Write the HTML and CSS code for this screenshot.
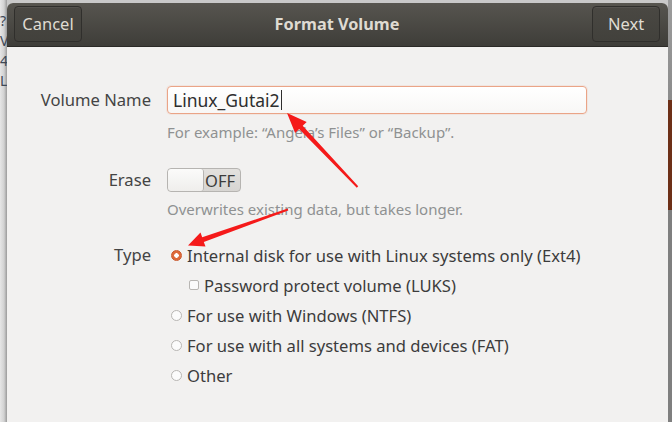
FILE: index.html
```html
<!DOCTYPE html>
<html>
<head>
<meta charset="utf-8">
<link rel="stylesheet" href="styles.css">
</head>
<body>
<div class="screen">
  <div class="behind-left">
    <span>?</span><span>V</span><span>4</span><span>L</span>
  </div>
  <div class="dialog">
    <header class="headerbar">
      <button class="hb-btn">Cancel</button>
      <div class="title">Format Volume</div>
      <button class="hb-btn">Next</button>
    </header>
    <main class="content">
      <div class="form">
        <div class="label row-name">Volume Name</div>
        <div class="field">
          <div class="entry"><span class="entry-text">Linux_Gutai2</span><span class="caret"></span></div>
          <div class="hint">For example: “Angela’s Files” or “Backup”.</div>
        </div>

        <div class="label row-erase">Erase</div>
        <div class="field">
          <div class="switch"><span class="knob"></span><span class="state">OFF</span></div>
          <div class="hint">Overwrites existing data, but takes longer.</div>
        </div>

        <div class="label row-type">Type</div>
        <div class="field options">
          <div class="opt"><span class="radio checked"></span>Internal disk for use with Linux systems only (Ext4)</div>
          <div class="opt sub"><span class="check"></span>Password protect volume (LUKS)</div>
          <div class="opt"><span class="radio"></span>For use with Windows (NTFS)</div>
          <div class="opt"><span class="radio"></span>For use with all systems and devices (FAT)</div>
          <div class="opt"><span class="radio"></span>Other</div>
        </div>
      </div>
    </main>
  </div>
  <div class="behind-right">
    <div class="br-top"></div>
    <div class="br-brown"></div>
    <div class="br-bottom"></div>
  </div>
</div>
<svg class="arrows" width="672" height="422" viewBox="0 0 672 422">
  <polygon fill="#f51a1a" points="287,113 306.7,121.9 302.7,125.7 358.2,186.3 356.8,187.7 299.1,129.1 295.1,132.9"/>
  <polygon fill="#f51a1a" points="188,245.5 200.5,232.6 202.2,237.3 287.7,208.6 288.3,210.4 203.8,242 205.5,246.6"/>
</svg>
</body>
</html>
```
FILE: styles.css
```css
html, body {
  margin: 0;
  padding: 0;
}
body {
  width: 672px;
  height: 422px;
  overflow: hidden;
  position: relative;
  font-family: "Noto Sans", "Open Sans", sans-serif;
  background: #c9c9c9;
}
.screen {
  display: flex;
  height: 422px;
}
.behind-left {
  width: 7px;
  flex: none;
  background: linear-gradient(to right, #e6e6e6 0, #d2d2d2 4px, #9a9a9a 7px);
  display: flex;
  flex-direction: column;
  padding-top: 14px;
  gap: 6px;
  overflow: hidden;
  font-size: 14px;
  color: #3d4856;
  line-height: 14px;
}
.behind-left span {
  display: block;
  height: 14px;
  width: 7px;
  overflow: hidden;
}
.dialog {
  width: 661px;
  flex: none;
  margin-top: 3px;
  display: flex;
  flex-direction: column;
  background: #f2f1f0;
  border-radius: 6px 6px 0 0;
  overflow: hidden;
}
.headerbar {
  height: 44px;
  flex: none;
  display: flex;
  align-items: center;
  justify-content: space-between;
  padding: 0 8px 0 7px;
  background: linear-gradient(to bottom, #57554f, #3e3d39);
  border-bottom: 1px solid #2b2a27;
  box-sizing: border-box;
}
.hb-btn {
  height: 36px;
  min-width: 68px;
  margin-top: -2px;
  padding: 0 7px;
  font-family: inherit;
  font-size: 16.5px;
  color: #dfdbd2;
  background: linear-gradient(to bottom, #4a4843, #42413c);
  border: 1px solid #302f2c;
  border-radius: 4px;
  box-shadow: inset 0 1px rgba(255,255,255,0.06);
}
.title {
  font-weight: bold;
  font-size: 16.3px;
  color: #dfdbd2;
  margin-top: -2px;
}
.content {
  flex: 1;
}
.form {
  display: grid;
  grid-template-columns: 144px 1fr;
  column-gap: 16px;
  padding: 39px 0 0 0;
  align-items: start;
  font-size: 16.6px;
  color: #3c3c3c;
}
.label {
  text-align: right;
  line-height: 28px;
  color: #444444;
}
.row-erase { margin-top: 26px; height: 24px; line-height: 24px; }
.row-type { margin-top: 26px; line-height: 20px; }
.field {
  display: flex;
  flex-direction: column;
}
.entry {
  width: 420px;
  height: 28px;
  box-sizing: border-box;
  border: 1px solid #eaa487;
  border-radius: 4px;
  background: linear-gradient(to bottom, #ffffff, #f8f7f6);
  box-shadow: 0 0 0 1px rgba(233,84,32,0.08);
  display: flex;
  align-items: center;
  padding-left: 5px;
  font-size: 17.5px;
  color: #2e2e2e;
}
.caret {
  width: 1px;
  height: 20px;
  background: #2e2e2e;
  margin-left: 1px;
}
.hint {
  margin-top: 8px;
  font-size: 15px;
  color: #8f9192;
  line-height: 20px;
}
.switch {
  margin-top: 26px;
  width: 74px;
  height: 24px;
  box-sizing: border-box;
  border: 1px solid #b6b4b1;
  border-radius: 4px;
  background: linear-gradient(to bottom, #e3e1de, #d7d5d2);
  display: flex;
  align-items: center;
  overflow: hidden;
}
.knob {
  width: 36px;
  height: 22px;
  box-sizing: border-box;
  background: linear-gradient(to bottom, #fbfbfa, #efeeec);
  border-right: 1px solid #b6b4b1;
  border-radius: 3px;
}
.state {
  font-size: 16.5px;
  color: #3c3c3c;
  margin-left: 1px;
}
.switch + .hint { margin-top: 7px; }
.options {
  margin-top: 26px;
  gap: 10px;
}
.opt {
  display: flex;
  align-items: center;
  height: 20px;
  color: #3c3c3c;
  white-space: nowrap;
}
.opt.sub {
  padding-left: 22px;
}
.radio {
  width: 9px;
  height: 9px;
  border-radius: 50%;
  border: 1px solid #b8b6b3;
  background: #fbfbfb;
  margin: 0 5px 0 4px;
  flex: none;
}
.radio.checked {
  background: radial-gradient(circle, #ffffff 0 2px, #df6a3b 2.5px);
  border-color: #c9582c;
}
.check {
  width: 8px;
  height: 8px;
  border: 1px solid #b8b6b3;
  border-radius: 2px;
  background: #fbfbfb;
  margin-right: 5px;
  flex: none;
}
.behind-right {
  flex: 1;
  display: flex;
  flex-direction: column;
}
.br-top { height: 100px; background: linear-gradient(to bottom, #9c9c9c, #8c8c8c); }
.br-brown { height: 110px; background: #6d3018; }
.br-bottom { flex: 1; background: #7f7f7f; }
.arrows {
  position: absolute;
  left: 0;
  top: 0;
  pointer-events: none;
}
```
